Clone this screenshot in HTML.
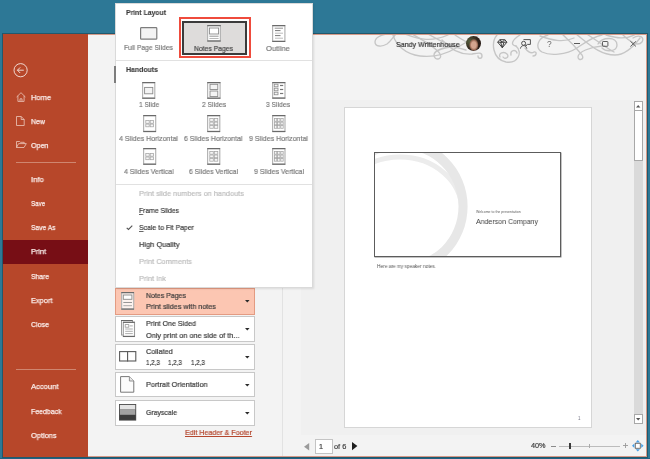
<!DOCTYPE html>
<html><head><meta charset="utf-8"><style>
*{margin:0;padding:0;box-sizing:border-box}
html,body{width:650px;height:459px;overflow:hidden;background:#2d7896;font-family:"Liberation Sans",sans-serif}
.a{position:absolute}
.t{position:absolute;line-height:1;white-space:nowrap;transform-origin:0 0;will-change:transform;-webkit-text-stroke:0.2px currentColor}
.sd{-webkit-text-stroke:0.25px currentColor}
u{text-decoration:underline;text-underline-offset:1px;text-decoration-thickness:0.6px;text-decoration-color:#666}
</style></head><body>
<!-- window -->
<div class="a" style="left:0;top:458px;width:650px;height:1px;background:#1f6282"></div>
<div class="a" style="left:2px;top:33px;width:646px;height:425px;background:#22586c"></div>
<div class="a" style="left:3px;top:34px;width:644px;height:423px;background:#d69a88"></div>
<div class="a" style="left:3px;top:35px;width:643px;height:421px;background:#f3f3f3"></div>
<!-- sidebar -->
<div class="a" style="left:3px;top:34px;width:85px;height:423px;background:#b7472a"></div>
<div class="a" style="left:3px;top:240px;width:85px;height:24px;background:#770e15"></div>
<div class="a" style="left:16px;top:162px;width:60px;height:1px;background:#cf8670"></div>
<div class="a" style="left:16px;top:369px;width:60px;height:1px;background:#cf8670"></div>
<svg class="a" style="left:12px;top:62px" width="17" height="17" viewBox="0 0 17 17"><circle cx="8.6" cy="8.2" r="6.6" fill="none" stroke="#f6e6e1" stroke-width="0.9"/><path d="M5.4 8.2 H11.8 M8.2 5.4 L5.4 8.2 L8.2 11" fill="none" stroke="#f6e6e1" stroke-width="0.9"/></svg>
<svg class="a" style="left:15.6px;top:92px" width="11" height="10" viewBox="0 0 11 10"><path d="M0.6 5 L5 0.7 L9.4 5 M1.9 3.8 V9.4 H8.1 V3.8 M4 9.4 V6.8 H6 V9.4" fill="none" stroke="#efcfc4" stroke-width="0.75" stroke-linejoin="round"/></svg>
<svg class="a" style="left:16.3px;top:116.2px" width="9" height="10" viewBox="0 0 9 10"><path d="M0.5 0.5 H5.2 L8.2 3.5 V9.5 H0.5 Z M5.2 0.5 V3.5 H8.2" fill="none" stroke="#efcfc4" stroke-width="0.75" stroke-linejoin="round"/></svg>
<svg class="a" style="left:15.5px;top:141.2px" width="11" height="7" viewBox="0 0 11 7"><path d="M0.5 0.5 H3.6 L4.4 1.3 H8.2 V2.6 M0.5 0.5 V6.5 H8 L10.3 2.6 H2.6 L0.5 6.5" fill="none" stroke="#efcfc4" stroke-width="0.75" stroke-linejoin="round"/></svg>
<div class="t sd" id="t0" style="left:30.60px;top:93.93px;font-size:8.0px;color:#fbefec;transform:scaleX(0.9363);">Home</div><div class="t sd" id="t1" style="left:30.60px;top:117.93px;font-size:8.0px;color:#fbefec;transform:scaleX(0.8728);">New</div><div class="t sd" id="t2" style="left:30.60px;top:141.93px;font-size:8.0px;color:#fbefec;transform:scaleX(0.8947);">Open</div><div class="t sd" id="t3" style="left:30.60px;top:175.63px;font-size:8.0px;color:#fbefec;transform:scaleX(0.9506);">Info</div><div class="t sd" id="t4" style="left:30.60px;top:199.73px;font-size:8.0px;color:#fbefec;transform:scaleX(0.7785);">Save</div><div class="t sd" id="t5" style="left:30.60px;top:223.83px;font-size:8.0px;color:#fbefec;transform:scaleX(0.8379);">Save As</div><div class="t sd" id="t6" style="left:30.60px;top:248.23px;font-size:8.0px;color:#fbefec;transform:scaleX(0.9124);">Print</div><div class="t sd" id="t7" style="left:30.60px;top:273.23px;font-size:8.0px;color:#fbefec;transform:scaleX(0.8427);">Share</div><div class="t sd" id="t8" style="left:30.60px;top:297.43px;font-size:8.0px;color:#fbefec;transform:scaleX(0.9256);">Export</div><div class="t sd" id="t9" style="left:30.60px;top:321.43px;font-size:8.0px;color:#fbefec;transform:scaleX(0.8806);">Close</div><div class="t sd" id="t10" style="left:30.60px;top:383.43px;font-size:8.0px;color:#fbefec;transform:scaleX(0.9509);">Account</div><div class="t sd" id="t11" style="left:30.60px;top:407.73px;font-size:8.0px;color:#fbefec;transform:scaleX(0.8703);">Feedback</div><div class="t sd" id="t12" style="left:30.60px;top:432.03px;font-size:8.0px;color:#fbefec;transform:scaleX(0.9289);">Options</div>
<!-- settings column -->
<div class="a" style="left:301px;top:100px;width:345px;height:335px;background:#f0f0f0"></div>
<div class="a" style="left:282px;top:35px;width:1px;height:421px;background:#e2e2e2"></div>
<!-- buttons -->
<div class="a" style="left:115px;top:288px;width:140px;height:27px;background:#fcc6b2;border:1px solid #e39b82"></div>
<div class="a" style="left:115px;top:316px;width:140px;height:26px;background:#fff;border:1px solid #c8c8c8"></div>
<div class="a" style="left:115px;top:344px;width:140px;height:26px;background:#fff;border:1px solid #c8c8c8"></div>
<div class="a" style="left:115px;top:372px;width:140px;height:25px;background:#fff;border:1px solid #c8c8c8"></div>
<div class="a" style="left:115px;top:400px;width:140px;height:26px;background:#fff;border:1px solid #c8c8c8"></div>
<div class="t" id="t33" style="left:145.80px;top:291.51px;font-size:7.9px;color:#3a3a3a;transform:scaleX(0.8844);">Notes Pages</div><div class="t" id="t34" style="left:145.80px;top:303.11px;font-size:7.9px;color:#3a3a3a;transform:scaleX(0.9163);">Print slides with notes</div><div class="t" id="t35" style="left:145.80px;top:319.81px;font-size:7.9px;color:#3a3a3a;transform:scaleX(0.8965);">Print One Sided</div><div class="t" id="t36" style="left:145.80px;top:331.51px;font-size:7.9px;color:#3a3a3a;transform:scaleX(0.9257);">Only print on one side of th...</div><div class="t" id="t37" style="left:146.00px;top:347.81px;font-size:7.9px;color:#3a3a3a;transform:scaleX(0.9244);">Collated</div><div class="t" id="t38" style="left:146.40px;top:359.01px;font-size:7.9px;color:#3a3a3a;transform:scaleX(0.7908);">1,2,3</div><div class="t" id="t39" style="left:168.30px;top:359.01px;font-size:7.9px;color:#3a3a3a;transform:scaleX(0.7908);">1,2,3</div><div class="t" id="t40" style="left:190.50px;top:359.01px;font-size:7.9px;color:#3a3a3a;transform:scaleX(0.7908);">1,2,3</div><div class="t" id="t41" style="left:145.80px;top:380.81px;font-size:7.9px;color:#3a3a3a;transform:scaleX(0.9303);">Portrait Orientation</div><div class="t" id="t42" style="left:145.80px;top:408.81px;font-size:7.9px;color:#3a3a3a;transform:scaleX(0.8720);">Grayscale</div><div class="t" id="t43" style="left:185.00px;top:429.41px;font-size:7.9px;color:#b5472e;transform:scaleX(0.9027);"><u style="text-decoration-color:#b5472e">Edit Header &amp; Footer</u></div>
<svg class="a" style="left:121.3px;top:291.9px;overflow:visible" width="13.3" height="17.7" viewBox="0 0 13.3 17.7"><rect x="0.6" y="0.6" width="12.100000000000001" height="16.5" fill="#fdf3ef" stroke="#b4b4b4" stroke-width="1.2"/><line x1="0.3" y1="0.6" x2="13.0" y2="0.6" stroke="#6a6a6a" stroke-width="1.2"/><line x1="0.3" y1="17.099999999999998" x2="13.0" y2="17.099999999999998" stroke="#6a6a6a" stroke-width="1.2"/><rect x="2.3" y="3" width="8.6" height="4.3" fill="#fff" stroke="#8a8a8a" stroke-width="0.9"/><line x1="2.3" y1="10.5" x2="11" y2="10.5" stroke="#8a8a8a" stroke-width="0.9"/><line x1="2.3" y1="13.7" x2="11" y2="13.7" stroke="#a0a0a0" stroke-width="0.9"/></svg><svg class="a" style="left:120.8px;top:320px;overflow:visible" width="14" height="17" viewBox="0 0 14 17"><rect x="0.5" y="0.5" width="11" height="14.5" fill="#fff" stroke="#9c9c9c" stroke-width="1"/><line x1="0" y1="0.5" x2="11.5" y2="0.5" stroke="#666" stroke-width="1"/><rect x="2.3" y="2.3" width="11.2" height="14.2" fill="#fff" stroke="#9c9c9c" stroke-width="1.1"/><line x1="2" y1="2.3" x2="13.8" y2="2.3" stroke="#666" stroke-width="1.1"/><line x1="2" y1="16.4" x2="13.8" y2="16.4" stroke="#666" stroke-width="1.1"/><rect x="4.2" y="4.6" width="3.6" height="2.6" fill="#fff" stroke="#999" stroke-width="0.8"/><line x1="8.6" y1="5.9" x2="11.8" y2="5.9" stroke="#999" stroke-width="0.8"/><line x1="4.2" y1="9" x2="11.8" y2="9" stroke="#999" stroke-width="0.8"/><line x1="4.2" y1="11.3" x2="11.8" y2="11.3" stroke="#999" stroke-width="0.8"/><line x1="4.2" y1="13.6" x2="11.8" y2="13.6" stroke="#999" stroke-width="0.8"/></svg><svg class="a" style="left:119.2px;top:351.2px;overflow:visible" width="17.4" height="10.6" viewBox="0 0 17.4 10.6"><rect x="0.6" y="0.6" width="8" height="9.4" fill="#fff" stroke="#5a5a5a" stroke-width="1.1"/><rect x="8.6" y="0.6" width="8.2" height="9.4" fill="#fff" stroke="#5a5a5a" stroke-width="1.1"/></svg><svg class="a" style="left:120.4px;top:376px;overflow:visible" width="14.4" height="16.8" viewBox="0 0 14.4 16.8"><path d="M0.6 0.6 H9.4 L13.8 5 V16.2 H0.6 Z" fill="#fcfcfc" stroke="#777" stroke-width="1" stroke-linejoin="round"/><path d="M9.4 0.6 V5 H13.8" fill="#e8e8e8" stroke="#888" stroke-width="0.9"/></svg><svg class="a" style="left:119.4px;top:404px;overflow:visible" width="17.2" height="16.6" viewBox="0 0 17.2 16.6"><rect x="0" y="0" width="17.2" height="16.6" fill="#4a4a4a"/><rect x="0.9" y="0.9" width="15.4" height="4.6" fill="#e3e3e3"/><rect x="0.9" y="5.5" width="15.4" height="5.4" fill="#a2a2a2"/><rect x="0.9" y="10.9" width="15.4" height="4.8" fill="#3d3d3d"/></svg><svg class="a" style="left:245.3px;top:300px;overflow:visible" width="4.6" height="2.6" viewBox="0 0 4.6 2.6"><path d="M0 0 H4.6 L2.3 2.6 Z" fill="#2b2b2b"/></svg><svg class="a" style="left:245.3px;top:328.2px;overflow:visible" width="4.6" height="2.6" viewBox="0 0 4.6 2.6"><path d="M0 0 H4.6 L2.3 2.6 Z" fill="#2b2b2b"/></svg><svg class="a" style="left:245.3px;top:356.4px;overflow:visible" width="4.6" height="2.6" viewBox="0 0 4.6 2.6"><path d="M0 0 H4.6 L2.3 2.6 Z" fill="#2b2b2b"/></svg><svg class="a" style="left:245.3px;top:384.4px;overflow:visible" width="4.6" height="2.6" viewBox="0 0 4.6 2.6"><path d="M0 0 H4.6 L2.3 2.6 Z" fill="#2b2b2b"/></svg><svg class="a" style="left:245.3px;top:412.4px;overflow:visible" width="4.6" height="2.6" viewBox="0 0 4.6 2.6"><path d="M0 0 H4.6 L2.3 2.6 Z" fill="#2b2b2b"/></svg>
<!-- preview -->
<div class="a" style="left:344px;top:107px;width:248px;height:321px;background:#fff;border:1px solid #d6d6d6"></div>
<div class="a" style="left:374px;top:152px;width:187px;height:105px;background:#fff;border:1px solid #5c5c5c;box-shadow:0.5px 0.5px 0 #888"></div>
<svg class="a" style="left:375px;top:153px;overflow:visible" width="185" height="103" viewBox="0 0 185 103"><defs><clipPath id="cp"><rect x="0" y="0" width="185" height="103"/></clipPath></defs><g clip-path="url(#cp)"><ellipse cx="25" cy="58" rx="62" ry="54" fill="none" stroke="#ececec" stroke-width="5"/><path fill-rule="evenodd" fill="#e7e7e7" d="M-44.8 53.5 A68.7 68.7 0 1 0 92.6 53.5 A68.7 68.7 0 1 0 -44.8 53.5 Z M-31.5 53.5 A57.5 57.5 0 1 0 83.5 53.5 A57.5 57.5 0 1 0 -31.5 53.5 Z"/></g></svg>
<div class="t" id="t48" style="left:475.70px;top:211.12px;font-size:3.4px;color:#606060;transform:scaleX(1.0344);-webkit-text-stroke:0;">Welcome to the presentation</div><div class="t" id="t49" style="left:476.00px;top:217.85px;font-size:7.5px;color:#404040;transform:scaleX(0.9351);-webkit-text-stroke:0;">Anderson Company</div><div class="t" id="t50" style="left:377.20px;top:264.55px;font-size:4.9px;color:#555;transform:scaleX(0.9758);-webkit-text-stroke:0;">Here are my speaker notes.</div><div class="t" id="t51" style="left:577.60px;top:417.19px;font-size:4.5px;color:#7a7a8a;-webkit-text-stroke:0;">1</div>
<!-- scrollbar -->
<div class="a" style="left:634px;top:101px;width:9px;height:323px;background:#dadada"></div>
<div class="a" style="left:634px;top:101px;width:9px;height:60px;background:#fff;border:1px solid #a8a8a8"></div>
<div class="a" style="left:634px;top:101px;width:9px;height:10px;background:#fff;border:1px solid #a8a8a8"></div>
<div class="a" style="left:634px;top:414px;width:9px;height:10px;background:#fff;border:1px solid #a8a8a8"></div>
<svg class="a" style="left:0;top:0" width="650" height="70" viewBox="0 0 650 70"><defs><clipPath id="swc"><rect x="300" y="35" width="347" height="35"/></clipPath></defs><g clip-path="url(#swc)" fill="none" stroke="#c6c6c6" stroke-width="1.35" stroke-linecap="round"><path d="M394 34 C386 33 375 36 375 42 C375 47 382 47 387 44 C391 41 393 37 396 34"/><path d="M393 35 C396 45 405 54 420 56 C435 58 448 53 458 47 C465 43 470 40 478 36"/><path d="M412 34 C422 40 436 47 440 54 C443 60 434 61 434 55 C434 50 446 47 458 46"/><path d="M405 34 C420 40 432 42 448 35"/><path d="M428 34 C440 41 452 47 466 50"/><path d="M442 40 C450 49 460 55 472 54 C478 53 482 52 482 56 C482 59 478 59 478 56"/><path d="M455 35 C462 40 470 44 478 48"/><path d="M497 35 C491 42 492 59 506 62 C518 64 523 52 516 46"/><path d="M500 57 C498 53 504 51 507 54 C510 57 505 60 503 57 M511 55 C510 50 516 49 517 53"/><path d="M520 35 C512 40 510 45 516 46"/><path d="M525 48 C528 52 531 54 534 52 C537 51 537 56 533 56"/><path d="M548 35 C537 38 535 48 542 52 C550 56 566 55 577 48 C586 42 592 37 602 35"/><path d="M540 36 C552 40 562 43 574 38"/><path d="M562 34 C571 42 578 50 582 55 C585 60 578 61 578 57 C578 52 590 47 602 46"/><path d="M576 34 C590 45 600 55 615 55 C626 55 634 46 640 38"/><path d="M588 35 C598 41 606 48 614 52"/><path d="M598 44 C602 37 617 36 617 45 C617 52 606 52 602 48"/><path d="M622 34 C630 42 638 47 642 42 C645 37 639 34 633 38"/><path d="M606 35 C616 38 626 40 636 34"/></g></svg>
<div class="a" style="left:466.4px;top:36.2px;width:14.8px;height:14.8px;border-radius:50%;background:radial-gradient(ellipse 32% 42% at 52% 60%, #d4a48e 0 50%, #9a6a55 78%, rgba(60,40,30,0) 100%), radial-gradient(circle at 25% 35%, #55603f 0, #2e2019 55%, #221713 100%)"></div><svg class="a" style="left:497px;top:38.8px;overflow:visible" width="10.6" height="9.4" viewBox="0 0 10.6 9.4"><path d="M0.7 3.2 L2.8 0.7 H7.8 L9.9 3.2 L5.3 8.7 Z M0.7 3.2 H9.9 M2.8 0.7 L5.3 3.2 L7.8 0.7 M5.3 3.2 L3.6 3.2 L5.3 8.7 L7 3.2" fill="none" stroke="#3d3d3d" stroke-width="1" stroke-linejoin="round"/></svg><svg class="a" style="left:520.3px;top:38.8px;overflow:visible" width="11" height="10" viewBox="0 0 11 10"><path d="M3.5 0.6 H10.4 V5.4 H7.5 L5.8 7 V5.4" fill="none" stroke="#4a4a4a" stroke-width="0.95"/><circle cx="3.6" cy="4.3" r="2" fill="#f3f3f3" stroke="#4a4a4a" stroke-width="0.95"/><path d="M0.4 9.6 C0.9 7.4 2.2 6.6 3.6 6.6 C5 6.6 6.3 7.4 6.8 9.6" fill="none" stroke="#4a4a4a" stroke-width="0.95"/></svg><div class="t" id="t52" style="left:546.90px;top:40.09px;font-size:8.4px;color:#666;-webkit-text-stroke:0;">?</div><div class="a" style="left:574.3px;top:43.4px;width:5.8px;height:1px;background:#5a5a5a"></div><svg class="a" style="left:601.8px;top:41.2px;overflow:visible" width="6.4" height="5.8" viewBox="0 0 6.4 5.8"><rect x="0.5" y="0.5" width="5.4" height="4.8" rx="0.6" fill="none" stroke="#555" stroke-width="0.95"/></svg><svg class="a" style="left:629.8px;top:41px;overflow:visible" width="6.4" height="5.8" viewBox="0 0 6.4 5.8"><path d="M0.4 0.3 L6 5.5 M6 0.3 L0.4 5.5" fill="none" stroke="#555" stroke-width="0.9"/></svg>
<svg class="a" style="left:304.4px;top:442.6px;overflow:visible" width="5.2" height="7.4" viewBox="0 0 5.2 7.4"><path d="M5.2 0 V7.4 L0 3.7 Z" fill="#9a9a9a"/></svg><div class="a" style="left:314.5px;top:439px;width:18px;height:14.5px;background:#fff;border:1px solid #c4c4c4"></div><svg class="a" style="left:352.4px;top:442.2px;overflow:visible" width="5.4" height="7.9" viewBox="0 0 5.4 7.9"><path d="M0 0 V8.2 L5.4 4.1 Z" fill="#1e1e1e"/></svg><div class="a" style="left:551.4px;top:445.6px;width:4.4px;height:1px;background:#8a8a8a"></div><div class="a" style="left:559px;top:445.6px;width:60.5px;height:1px;background:#bcbcbc"></div><div class="a" style="left:569.4px;top:443px;width:1.3px;height:6px;background:#3a3a3a"></div><div class="a" style="left:589.2px;top:444px;width:1px;height:4px;background:#aaa"></div><svg class="a" style="left:623px;top:443.3px;overflow:visible" width="5" height="5" viewBox="0 0 5 5"><path d="M0 2.5 H5 M2.5 0 V5" stroke="#9a9a9a" stroke-width="0.9"/></svg><svg class="a" style="left:631.5px;top:440.2px;overflow:visible" width="11.6" height="11.6" viewBox="0 0 11.6 11.6"><path d="M5.8 0 L8 2.4 H3.6 Z M5.8 11.6 L8 9.2 H3.6 Z M0 5.8 L2.4 3.6 V8 Z M11.6 5.8 L9.2 3.6 V8 Z" fill="#4aa0e6"/><rect x="3.3" y="3.3" width="5" height="5" fill="#fff" stroke="#666" stroke-width="0.9"/></svg><svg class="a" style="left:636.3px;top:104.6px;overflow:visible" width="4.4" height="2.6" viewBox="0 0 4.4 2.6"><path d="M0 2.6 H4.4 L2.2 0 Z" fill="#555"/></svg><svg class="a" style="left:636.3px;top:418px;overflow:visible" width="4.4" height="2.6" viewBox="0 0 4.4 2.6"><path d="M0 0 H4.4 L2.2 2.6 Z" fill="#555"/></svg>
<div class="t" id="t44" style="left:395.70px;top:40.80px;font-size:7.8px;color:#333;transform:scaleX(0.9089);">Sandy Writtenhouse</div><div class="t" id="t45" style="left:531.00px;top:442.31px;font-size:7.2px;color:#444;transform:scaleX(1.0139);">40%</div><div class="t" id="t46" style="left:334.30px;top:442.71px;font-size:7.2px;color:#444;transform:scaleX(1.0313);">of 6</div><div class="t" id="t47" style="left:318.80px;top:442.71px;font-size:7.2px;color:#444;">1</div>
<!-- dropdown -->
<div class="a" style="left:115px;top:3px;width:198px;height:285px;background:#fff;border:1px solid #dadada;box-shadow:1px 1px 2px rgba(0,0,0,0.10)"></div>
<div class="a" style="left:116px;top:60px;width:196px;height:1px;background:#e1e1e1"></div>
<div class="a" style="left:116px;top:184px;width:196px;height:1px;background:#e1e1e1"></div>
<div class="a" style="left:179px;top:17px;width:72px;height:41px;border:2px solid #ef4b3c"></div>
<div class="a" style="left:182px;top:20.6px;width:65px;height:34.4px;background:#dedcdb;border:2px solid #3b3b3b"></div>
<div class="t" id="t13" style="left:125.50px;top:9.14px;font-size:7.4px;color:#3a3a3a;font-weight:700;-webkit-text-stroke:0.1px currentColor;transform:scaleX(0.9264);">Print Layout</div><div class="t" id="t14" style="left:124.20px;top:44.21px;font-size:7.9px;color:#7a7a7a;transform:scaleX(0.8585);">Full Page Slides</div><div class="t" id="t15" style="left:194.20px;top:44.71px;font-size:7.9px;color:#444;transform:scaleX(0.8623);">Notes Pages</div><div class="t" id="t16" style="left:266.20px;top:44.61px;font-size:7.9px;color:#7a7a7a;transform:scaleX(0.9584);">Outline</div><div class="t" id="t17" style="left:125.50px;top:66.04px;font-size:7.4px;color:#3a3a3a;font-weight:700;-webkit-text-stroke:0.1px currentColor;transform:scaleX(0.9380);">Handouts</div><div class="t" id="t18" style="left:139.30px;top:101.21px;font-size:7.9px;color:#7a7a7a;transform:scaleX(0.8397);">1 Slide</div><div class="t" id="t19" style="left:201.50px;top:101.21px;font-size:7.9px;color:#7a7a7a;transform:scaleX(0.8534);">2 Slides</div><div class="t" id="t20" style="left:266.10px;top:101.21px;font-size:7.9px;color:#7a7a7a;transform:scaleX(0.8534);">3 Slides</div><div class="t" id="t21" style="left:119.00px;top:134.71px;font-size:7.9px;color:#7a7a7a;transform:scaleX(0.8955);">4 Slides Horizontal</div><div class="t" id="t22" style="left:184.20px;top:134.71px;font-size:7.9px;color:#7a7a7a;transform:scaleX(0.8879);">6 Slides Horizontal</div><div class="t" id="t23" style="left:248.80px;top:134.71px;font-size:7.9px;color:#7a7a7a;transform:scaleX(0.8955);">9 Slides Horizontal</div><div class="t" id="t24" style="left:123.60px;top:168.01px;font-size:7.9px;color:#7a7a7a;transform:scaleX(0.8842);">4 Slides Vertical</div><div class="t" id="t25" style="left:188.80px;top:168.01px;font-size:7.9px;color:#7a7a7a;transform:scaleX(0.8718);">6 Slides Vertical</div><div class="t" id="t26" style="left:253.50px;top:168.01px;font-size:7.9px;color:#7a7a7a;transform:scaleX(0.8895);">9 Slides Vertical</div><div class="t" id="t27" style="left:139.10px;top:190.41px;font-size:7.9px;color:#bdbdbd;transform:scaleX(0.9269);">Print slide numbers on handouts</div><div class="t" id="t28" style="left:139.10px;top:207.21px;font-size:7.9px;color:#3a3a3a;transform:scaleX(0.8596);"><u>F</u>rame Slides</div><div class="t" id="t29" style="left:139.10px;top:223.81px;font-size:7.9px;color:#3a3a3a;transform:scaleX(0.8757);"><u>S</u>cale to Fit Paper</div><div class="t" id="t30" style="left:139.10px;top:241.11px;font-size:7.9px;color:#3a3a3a;transform:scaleX(0.9438);">High Quality</div><div class="t" id="t31" style="left:139.10px;top:257.91px;font-size:7.9px;color:#bdbdbd;transform:scaleX(0.9357);">Print Comments</div><div class="t" id="t32" style="left:139.10px;top:274.51px;font-size:7.9px;color:#bdbdbd;transform:scaleX(0.9300);">Print Ink</div>
<svg class="a" style="left:140.4px;top:26.8px;overflow:visible" width="17.4" height="12.8" viewBox="0 0 17.4 12.8"><rect x="0.6" y="0.6" width="16.2" height="11.6" rx="0.8" fill="#f3f3f3" stroke="#7d7d7d" stroke-width="1.2"/></svg><svg class="a" style="left:206.7px;top:25px;overflow:visible" width="14" height="16.6" viewBox="0 0 14 16.6"><rect x="0.6" y="0.6" width="12.8" height="15.400000000000002" fill="#fff" stroke="#b4b4b4" stroke-width="1.2"/><line x1="0.3" y1="0.6" x2="13.7" y2="0.6" stroke="#6a6a6a" stroke-width="1.2"/><line x1="0.3" y1="16.0" x2="13.7" y2="16.0" stroke="#6a6a6a" stroke-width="1.2"/><rect x="2.4" y="3" width="9.2" height="6" fill="#fff" stroke="#8a8a8a" stroke-width="0.9"/><line x1="2.4" y1="11.2" x2="11.6" y2="11.2" stroke="#8a8a8a" stroke-width="0.9"/><line x1="2.4" y1="13.5" x2="11.6" y2="13.5" stroke="#b0b0b0" stroke-width="0.9"/></svg><svg class="a" style="left:271.8px;top:24.8px;overflow:visible" width="13.5" height="17" viewBox="0 0 13.5 17"><rect x="0.6" y="0.6" width="12.3" height="15.8" fill="#fff" stroke="#b4b4b4" stroke-width="1.2"/><line x1="0.3" y1="0.6" x2="13.2" y2="0.6" stroke="#6a6a6a" stroke-width="1.2"/><line x1="0.3" y1="16.4" x2="13.2" y2="16.4" stroke="#6a6a6a" stroke-width="1.2"/><line x1="2.7" y1="3.2" x2="11" y2="3.2" stroke="#777" stroke-width="0.8"/><line x1="3" y1="5.6" x2="8.5" y2="5.6" stroke="#555" stroke-width="0.8"/><line x1="3" y1="8.2" x2="11" y2="8.2" stroke="#aaa" stroke-width="0.8"/><line x1="3" y1="10.6" x2="8.5" y2="10.6" stroke="#555" stroke-width="0.8"/><line x1="3" y1="13.2" x2="11" y2="13.2" stroke="#aaa" stroke-width="0.8"/></svg><svg class="a" style="left:142.4px;top:82px;overflow:visible" width="13.4" height="16.8" viewBox="0 0 13.4 16.8"><rect x="0.6" y="0.6" width="12.200000000000001" height="15.600000000000001" fill="#fff" stroke="#b4b4b4" stroke-width="1.2"/><line x1="0.3" y1="0.6" x2="13.1" y2="0.6" stroke="#6a6a6a" stroke-width="1.2"/><line x1="0.3" y1="16.2" x2="13.1" y2="16.2" stroke="#6a6a6a" stroke-width="1.2"/><rect x="2.6" y="5.4" width="8.2" height="6.4" fill="#f4f4f4" stroke="#8a8a8a" stroke-width="0.9"/></svg><svg class="a" style="left:207px;top:82px;overflow:visible" width="13.7" height="16.8" viewBox="0 0 13.7 16.8"><rect x="0.6" y="0.6" width="12.5" height="15.600000000000001" fill="#fff" stroke="#b4b4b4" stroke-width="1.2"/><line x1="0.3" y1="0.6" x2="13.399999999999999" y2="0.6" stroke="#6a6a6a" stroke-width="1.2"/><line x1="0.3" y1="16.2" x2="13.399999999999999" y2="16.2" stroke="#6a6a6a" stroke-width="1.2"/><rect x="3" y="2.3" width="7.8" height="5.2" fill="#f4f4f4" stroke="#8a8a8a" stroke-width="0.9"/><rect x="3" y="9" width="7.8" height="5.6" fill="#f4f4f4" stroke="#8a8a8a" stroke-width="0.9"/></svg><svg class="a" style="left:271.8px;top:82px;overflow:visible" width="13.6" height="16.7" viewBox="0 0 13.6 16.7"><rect x="0.6" y="0.6" width="12.4" height="15.5" fill="#fff" stroke="#b4b4b4" stroke-width="1.2"/><line x1="0.3" y1="0.6" x2="13.299999999999999" y2="0.6" stroke="#6a6a6a" stroke-width="1.2"/><line x1="0.3" y1="16.099999999999998" x2="13.299999999999999" y2="16.099999999999998" stroke="#6a6a6a" stroke-width="1.2"/><rect x="2.2" y="2.2" width="3.8" height="2.6" fill="#f4f4f4" stroke="#888" stroke-width="0.8"/><line x1="8" y1="3.5" x2="11.2" y2="3.5" stroke="#777" stroke-width="1.2"/><rect x="2.2" y="6.2" width="3.8" height="2.6" fill="#f4f4f4" stroke="#888" stroke-width="0.8"/><line x1="8" y1="7.5" x2="11.2" y2="7.5" stroke="#777" stroke-width="1.2"/><rect x="2.2" y="10.2" width="3.8" height="2.6" fill="#f4f4f4" stroke="#888" stroke-width="0.8"/><line x1="8" y1="11.5" x2="11.2" y2="11.5" stroke="#777" stroke-width="1.2"/></svg><svg class="a" style="left:142.5px;top:115.1px;overflow:visible" width="13.3" height="17.1" viewBox="0 0 13.3 17.1"><rect x="0.6" y="0.6" width="12.100000000000001" height="15.900000000000002" fill="#fff" stroke="#b4b4b4" stroke-width="1.2"/><line x1="0.3" y1="0.6" x2="13.0" y2="0.6" stroke="#6a6a6a" stroke-width="1.2"/><line x1="0.3" y1="16.5" x2="13.0" y2="16.5" stroke="#6a6a6a" stroke-width="1.2"/><rect x="2.8" y="5.6000000000000005" width="3.4000000000000004" height="2.7" fill="#f6f6f6" stroke="#a4a4a4" stroke-width="0.75"/><rect x="7.200000000000001" y="5.6000000000000005" width="3.4000000000000004" height="2.7" fill="#f6f6f6" stroke="#a4a4a4" stroke-width="0.75"/><rect x="2.8" y="9.1" width="3.4000000000000004" height="2.7" fill="#f6f6f6" stroke="#a4a4a4" stroke-width="0.75"/><rect x="7.200000000000001" y="9.1" width="3.4000000000000004" height="2.7" fill="#f6f6f6" stroke="#a4a4a4" stroke-width="0.75"/></svg><svg class="a" style="left:207.2px;top:115.1px;overflow:visible" width="13.4" height="17.1" viewBox="0 0 13.4 17.1"><rect x="0.6" y="0.6" width="12.200000000000001" height="15.900000000000002" fill="#fff" stroke="#b4b4b4" stroke-width="1.2"/><line x1="0.3" y1="0.6" x2="13.1" y2="0.6" stroke="#6a6a6a" stroke-width="1.2"/><line x1="0.3" y1="16.5" x2="13.1" y2="16.5" stroke="#6a6a6a" stroke-width="1.2"/><rect x="2.8" y="3.6" width="3.5" height="2.7" fill="#f6f6f6" stroke="#a4a4a4" stroke-width="0.75"/><rect x="7.300000000000001" y="3.6" width="3.5" height="2.7" fill="#f6f6f6" stroke="#a4a4a4" stroke-width="0.75"/><rect x="2.8" y="7.1000000000000005" width="3.5" height="2.7" fill="#f6f6f6" stroke="#a4a4a4" stroke-width="0.75"/><rect x="7.300000000000001" y="7.1000000000000005" width="3.5" height="2.7" fill="#f6f6f6" stroke="#a4a4a4" stroke-width="0.75"/><rect x="2.8" y="10.6" width="3.5" height="2.7" fill="#f6f6f6" stroke="#a4a4a4" stroke-width="0.75"/><rect x="7.300000000000001" y="10.6" width="3.5" height="2.7" fill="#f6f6f6" stroke="#a4a4a4" stroke-width="0.75"/></svg><svg class="a" style="left:271.8px;top:115.1px;overflow:visible" width="13.6" height="17.1" viewBox="0 0 13.6 17.1"><rect x="0.6" y="0.6" width="12.4" height="15.900000000000002" fill="#fff" stroke="#b4b4b4" stroke-width="1.2"/><line x1="0.3" y1="0.6" x2="13.299999999999999" y2="0.6" stroke="#6a6a6a" stroke-width="1.2"/><line x1="0.3" y1="16.5" x2="13.299999999999999" y2="16.5" stroke="#6a6a6a" stroke-width="1.2"/><rect x="2.4" y="3.6" width="2.4000000000000004" height="2.7" fill="#f6f6f6" stroke="#a4a4a4" stroke-width="0.75"/><rect x="5.6000000000000005" y="3.6" width="2.4000000000000004" height="2.7" fill="#f6f6f6" stroke="#a4a4a4" stroke-width="0.75"/><rect x="8.8" y="3.6" width="2.4000000000000004" height="2.7" fill="#f6f6f6" stroke="#a4a4a4" stroke-width="0.75"/><rect x="2.4" y="7.1000000000000005" width="2.4000000000000004" height="2.7" fill="#f6f6f6" stroke="#a4a4a4" stroke-width="0.75"/><rect x="5.6000000000000005" y="7.1000000000000005" width="2.4000000000000004" height="2.7" fill="#f6f6f6" stroke="#a4a4a4" stroke-width="0.75"/><rect x="8.8" y="7.1000000000000005" width="2.4000000000000004" height="2.7" fill="#f6f6f6" stroke="#a4a4a4" stroke-width="0.75"/><rect x="2.4" y="10.6" width="2.4000000000000004" height="2.7" fill="#f6f6f6" stroke="#a4a4a4" stroke-width="0.75"/><rect x="5.6000000000000005" y="10.6" width="2.4000000000000004" height="2.7" fill="#f6f6f6" stroke="#a4a4a4" stroke-width="0.75"/><rect x="8.8" y="10.6" width="2.4000000000000004" height="2.7" fill="#f6f6f6" stroke="#a4a4a4" stroke-width="0.75"/></svg><svg class="a" style="left:142.5px;top:148.4px;overflow:visible" width="13.3" height="16.8" viewBox="0 0 13.3 16.8"><rect x="0.6" y="0.6" width="12.100000000000001" height="15.600000000000001" fill="#fff" stroke="#b4b4b4" stroke-width="1.2"/><line x1="0.3" y1="0.6" x2="13.0" y2="0.6" stroke="#6a6a6a" stroke-width="1.2"/><line x1="0.3" y1="16.2" x2="13.0" y2="16.2" stroke="#6a6a6a" stroke-width="1.2"/><rect x="2.8" y="5.5" width="3.4000000000000004" height="2.7" fill="#f6f6f6" stroke="#a4a4a4" stroke-width="0.75"/><rect x="7.200000000000001" y="5.5" width="3.4000000000000004" height="2.7" fill="#f6f6f6" stroke="#a4a4a4" stroke-width="0.75"/><rect x="2.8" y="9.0" width="3.4000000000000004" height="2.7" fill="#f6f6f6" stroke="#a4a4a4" stroke-width="0.75"/><rect x="7.200000000000001" y="9.0" width="3.4000000000000004" height="2.7" fill="#f6f6f6" stroke="#a4a4a4" stroke-width="0.75"/></svg><svg class="a" style="left:207.2px;top:148.4px;overflow:visible" width="13.4" height="16.8" viewBox="0 0 13.4 16.8"><rect x="0.6" y="0.6" width="12.200000000000001" height="15.600000000000001" fill="#fff" stroke="#b4b4b4" stroke-width="1.2"/><line x1="0.3" y1="0.6" x2="13.1" y2="0.6" stroke="#6a6a6a" stroke-width="1.2"/><line x1="0.3" y1="16.2" x2="13.1" y2="16.2" stroke="#6a6a6a" stroke-width="1.2"/><rect x="2.8" y="3.5" width="3.5" height="2.7" fill="#f6f6f6" stroke="#a4a4a4" stroke-width="0.75"/><rect x="7.300000000000001" y="3.5" width="3.5" height="2.7" fill="#f6f6f6" stroke="#a4a4a4" stroke-width="0.75"/><rect x="2.8" y="7.0" width="3.5" height="2.7" fill="#f6f6f6" stroke="#a4a4a4" stroke-width="0.75"/><rect x="7.300000000000001" y="7.0" width="3.5" height="2.7" fill="#f6f6f6" stroke="#a4a4a4" stroke-width="0.75"/><rect x="2.8" y="10.5" width="3.5" height="2.7" fill="#f6f6f6" stroke="#a4a4a4" stroke-width="0.75"/><rect x="7.300000000000001" y="10.5" width="3.5" height="2.7" fill="#f6f6f6" stroke="#a4a4a4" stroke-width="0.75"/></svg><svg class="a" style="left:271.8px;top:148.4px;overflow:visible" width="13.6" height="16.8" viewBox="0 0 13.6 16.8"><rect x="0.6" y="0.6" width="12.4" height="15.600000000000001" fill="#fff" stroke="#b4b4b4" stroke-width="1.2"/><line x1="0.3" y1="0.6" x2="13.299999999999999" y2="0.6" stroke="#6a6a6a" stroke-width="1.2"/><line x1="0.3" y1="16.2" x2="13.299999999999999" y2="16.2" stroke="#6a6a6a" stroke-width="1.2"/><rect x="2.4" y="3.5" width="2.4000000000000004" height="2.7" fill="#f6f6f6" stroke="#a4a4a4" stroke-width="0.75"/><rect x="5.6000000000000005" y="3.5" width="2.4000000000000004" height="2.7" fill="#f6f6f6" stroke="#a4a4a4" stroke-width="0.75"/><rect x="8.8" y="3.5" width="2.4000000000000004" height="2.7" fill="#f6f6f6" stroke="#a4a4a4" stroke-width="0.75"/><rect x="2.4" y="7.0" width="2.4000000000000004" height="2.7" fill="#f6f6f6" stroke="#a4a4a4" stroke-width="0.75"/><rect x="5.6000000000000005" y="7.0" width="2.4000000000000004" height="2.7" fill="#f6f6f6" stroke="#a4a4a4" stroke-width="0.75"/><rect x="8.8" y="7.0" width="2.4000000000000004" height="2.7" fill="#f6f6f6" stroke="#a4a4a4" stroke-width="0.75"/><rect x="2.4" y="10.5" width="2.4000000000000004" height="2.7" fill="#f6f6f6" stroke="#a4a4a4" stroke-width="0.75"/><rect x="5.6000000000000005" y="10.5" width="2.4000000000000004" height="2.7" fill="#f6f6f6" stroke="#a4a4a4" stroke-width="0.75"/><rect x="8.8" y="10.5" width="2.4000000000000004" height="2.7" fill="#f6f6f6" stroke="#a4a4a4" stroke-width="0.75"/></svg><svg class="a" style="left:126px;top:224.6px;overflow:visible" width="7" height="5.2" viewBox="0 0 7 5.2"><path d="M0.7 2.8 L2.5 4.5 L6.3 0.7" fill="none" stroke="#555" stroke-width="1.15"/></svg>
<div class="a" style="left:114px;top:66px;width:2px;height:17px;background:#7d7d7d"></div>
</body></html>
